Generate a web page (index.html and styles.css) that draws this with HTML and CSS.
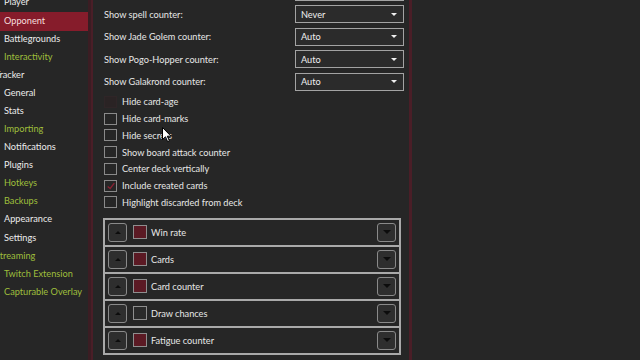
FILE: index.html
```html
<!DOCTYPE html>
<html>
<head>
<meta charset="utf-8">
<link rel="stylesheet" href="styles.css">
</head>
<body>
<nav class="sidebar">
  <ul class="nav">
    <li class="item">Player</li>
    <li class="item active">Opponent</li>
    <li class="item">Battlegrounds</li>
    <li class="item green">Interactivity</li>
    <li class="heading">Tracker</li>
    <li class="item">General</li>
    <li class="item">Stats</li>
    <li class="item green">Importing</li>
    <li class="item">Notifications</li>
    <li class="item">Plugins</li>
    <li class="item green">Hotkeys</li>
    <li class="item green">Backups</li>
    <li class="item">Appearance</li>
    <li class="item">Settings</li>
    <li class="heading green">Streaming</li>
    <li class="item green">Twitch Extension</li>
    <li class="item green">Capturable Overlay</li>
  </ul>
</nav>
<main class="panel">
  <div class="form-row">
    <span class="label">Show secrets:</span>
    <div class="select"><span>Auto</span><span class="caret"></span></div>
  </div>
  <div class="form-row">
    <span class="label">Show spell counter:</span>
    <div class="select"><span>Never</span><span class="caret"></span></div>
  </div>
  <div class="form-row">
    <span class="label">Show Jade Golem counter:</span>
    <div class="select"><span>Auto</span><span class="caret"></span></div>
  </div>
  <div class="form-row">
    <span class="label">Show Pogo-Hopper counter:</span>
    <div class="select"><span>Auto</span><span class="caret"></span></div>
  </div>
  <div class="form-row">
    <span class="label">Show Galakrond counter:</span>
    <div class="select"><span>Auto</span><span class="caret"></span></div>
  </div>

  <div class="checks">
    <div class="check-row"><span class="box faded"></span><span>Hide card-age</span></div>
    <div class="check-row"><span class="box"></span><span>Hide card-marks</span></div>
    <div class="check-row"><span class="box"></span><span>Hide secrets</span></div>
    <div class="check-row"><span class="box"></span><span>Show board attack counter</span></div>
    <div class="check-row"><span class="box"></span><span>Center deck vertically</span></div>
    <div class="check-row"><span class="box"><svg viewBox="0 0 12 12" width="10" height="10"><path d="M2 6.5 L5 9 L10 2.5" fill="none" stroke="#8a2233" stroke-width="1.6"/></svg></span><span>Include created cards</span></div>
    <div class="check-row"><span class="box"></span><span>Highlight discarded from deck</span></div>
  </div>

  <div class="order-list">
    <div class="order-row">
      <span class="btn"><span class="tri-up"></span></span>
      <span class="obox on"></span><span class="olabel">Win rate</span>
      <span class="btn"><span class="tri-down"></span></span>
    </div>
    <div class="order-row">
      <span class="btn"><span class="tri-up"></span></span>
      <span class="obox on"></span><span class="olabel">Cards</span>
      <span class="btn"><span class="tri-down"></span></span>
    </div>
    <div class="order-row">
      <span class="btn"><span class="tri-up"></span></span>
      <span class="obox on"></span><span class="olabel">Card counter</span>
      <span class="btn"><span class="tri-down"></span></span>
    </div>
    <div class="order-row">
      <span class="btn"><span class="tri-up"></span></span>
      <span class="obox"></span><span class="olabel">Draw chances</span>
      <span class="btn"><span class="tri-down"></span></span>
    </div>
    <div class="order-row">
      <span class="btn"><span class="tri-up"></span></span>
      <span class="obox on"></span><span class="olabel">Fatigue counter</span>
      <span class="btn"><span class="tri-down"></span></span>
    </div>
  </div>
</main>
<svg class="cursor" width="10" height="16" viewBox="0 0 10 16"><path d="M0.5 0.5 L0.5 12.5 L3.5 9.8 L5.6 14.6 L7.4 13.8 L5.3 9.2 L9 9.2 Z" fill="#fff" stroke="#000" stroke-width="1"/></svg>
</body>
</html>
```

FILE: styles.css
```css
* { box-sizing: border-box; margin: 0; padding: 0; }
html, body { width: 640px; height: 360px; overflow: hidden; }
body {
  background: #262626;
  font-family: Lato, "Open Sans", sans-serif;
  font-size: 9.2px;
  color: #e6e6e6;
  display: flex;
  align-items: flex-start;
  position: relative;
}
.sidebar {
  width: 91px;
  height: 360px;
  border-right: 3px solid #3a1d23;
  overflow: hidden;
  flex: none;
}
.nav { list-style: none; margin-top: -6.7px; }
.nav li {
  height: 18.1px;
  line-height: 18.1px;
  white-space: nowrap;
}
.item { padding-left: 4px; color: #ececec; }
.heading { margin-left: -5px; color: #ececec; }
.green { color: #9fbf3c; }
.item.active {
  background: #861c2b;
  color: #f6dede;
  margin-top: 1px;
  margin-bottom: -1px;
}
.panel {
  width: 321px;
  height: 360px;
  border-left: 2px solid #4a1e27;
  border-right: 3px solid #4a1e27;
  padding: 0 5px 0 11px;
  overflow: hidden;
  flex: none;
}
.form-row {
  display: flex;
  align-items: center;
  height: 18px;
  margin-bottom: 4.5px;
}
.form-row:first-child { margin-top: -17.5px; }
.label { flex: 1; }
.select {
  width: 109px;
  height: 18px;
  border: 1.5px solid #a3a3a3;
  background: #2b2b2b;
  display: flex;
  align-items: center;
  justify-content: space-between;
  padding: 0 6px 0 5px;
  color: #f0f0f0;
}
.caret {
  width: 0; height: 0;
  border-left: 3px solid transparent;
  border-right: 3px solid transparent;
  border-top: 3.5px solid #f0f0f0;
}
.checks { margin-top: -1.5px; }
.check-row {
  display: flex;
  align-items: center;
  height: 16.75px;
  gap: 5px;
}
.box {
  width: 13px; height: 12px;
  border: 1px solid #8a8a8a;
  display: flex; align-items: center; justify-content: center;
  flex: none;
}
.box.faded { border-color: #2f2527; background: #2a2324; }
.order-list {
  margin-top: 7px;
  margin-left: -1px;
  width: 298px;
  border: 2px solid #a9a9a9;
}
.order-row {
  height: 27px;
  border-bottom: 2px solid #a9a9a9;
  display: flex;
  align-items: center;
  padding: 0 3px;
}
.order-row:last-child { border-bottom: none; height: 25px; }
.btn {
  width: 19px; height: 19px;
  border: 1.5px solid #8a8a8a;
  border-radius: 3px;
  background: #2e2e2e;
  display: flex; align-items: center; justify-content: center;
  flex: none;
}
.tri-up {
  width: 0; height: 0;
  border-left: 3.5px solid transparent;
  border-right: 3.5px solid transparent;
  border-bottom: 3.5px solid #0c0c0c;
}
.tri-down {
  width: 0; height: 0;
  border-left: 4px solid transparent;
  border-right: 4px solid transparent;
  border-top: 4px solid #0c0c0c;
}
.obox {
  width: 14px; height: 14px;
  margin-left: 6px;
  border: 1.5px solid #8e8e8e;
  background: #2a2a2a;
  flex: none;
}
.obox.on { background: #5b1a24; }
.olabel { flex: 1; margin-left: 4px; }
.cursor { position: absolute; left: 162px; top: 127px; }
```
